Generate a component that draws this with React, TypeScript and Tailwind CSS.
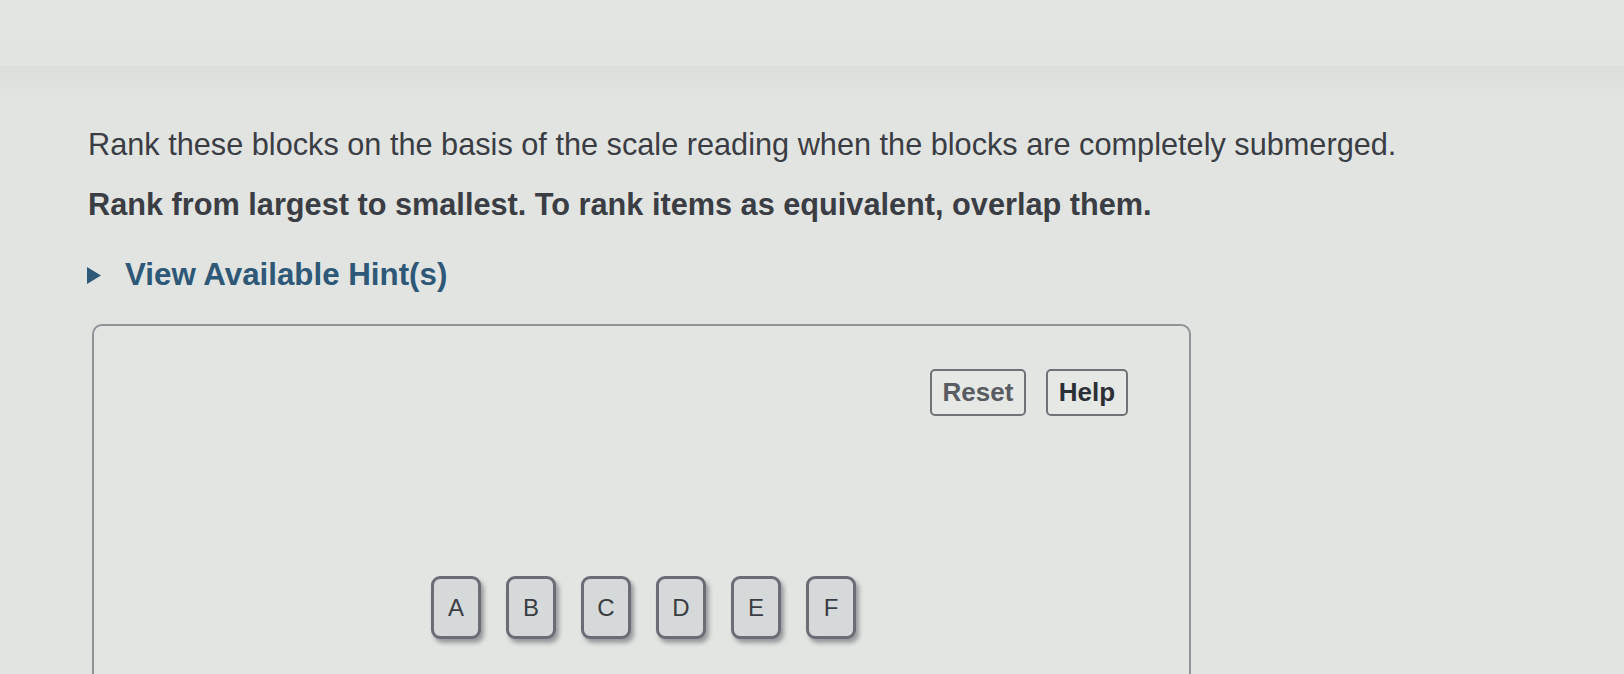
import React from 'react';

const BLOCKS = ['A', 'B', 'C', 'D', 'E', 'F'];

export default function App() {
  return (
    <div className="relative min-h-[674px] overflow-hidden bg-[#e2e4e1] font-['Liberation_Sans',Arial,sans-serif] text-[#3a3d43]">
      {/* faint band at the top of the photo */}
      <div className="h-[66px] bg-gradient-to-b from-[#e4e6e3] to-[#e2e4e1]" />
      <div className="h-[32px] bg-gradient-to-b from-[#dcdedb] to-[#e2e4e1]" />

      <div className="pl-[88px] pt-[31px]">
        <p className="text-[30.7px] leading-[32px]">
          Rank these blocks on the basis of the scale reading when the blocks are completely submerged.
        </p>
        <p className="mt-[28px] text-[30.7px] font-bold leading-[32px]">
          Rank from largest to smallest. To rank items as equivalent, overlap them.
        </p>
        <button className="mt-[38px] flex items-center gap-[23px] text-[31.3px] font-bold leading-[32px] text-[#2e5877]">
          <svg width="16" height="17" viewBox="0 0 16 17" className="-ml-[2px]">
            <polygon points="1,0 15,8.5 1,17" fill="#2e5877" />
          </svg>
          View Available Hint(s)
        </button>
      </div>

      <div className="ml-[92px] mt-[33px] h-[400px] w-[1099px] rounded-[10px] border-2 border-[#8f9297] bg-[#e3e5e2]">
        <div className="flex justify-end gap-[20px] pr-[61px] pt-[43px]">
          <button className="h-[47px] w-[96px] rounded-[5px] border-2 border-[#6f7378] bg-[#e6e8e6] text-[26px] font-bold text-[#595c61]">
            Reset
          </button>
          <button className="h-[47px] w-[82px] rounded-[5px] border-2 border-[#6f7378] bg-[#e6e8e6] text-[26px] font-bold text-[#2c2f36]">
            Help
          </button>
        </div>
        <div className="mt-[160px] flex gap-[25px] pl-[337px]">
          {BLOCKS.map((b) => (
            <div
              key={b}
              className="flex h-[63px] w-[50px] items-center justify-center rounded-[9px] border-[3px] border-[#6a6d75] bg-[#d6d9d9] text-[24px] text-[#3a3d42] shadow-[3px_4px_4px_rgba(60,62,70,0.45)]"
            >
              {b}
            </div>
          ))}
        </div>
      </div>
    </div>
  );
}
